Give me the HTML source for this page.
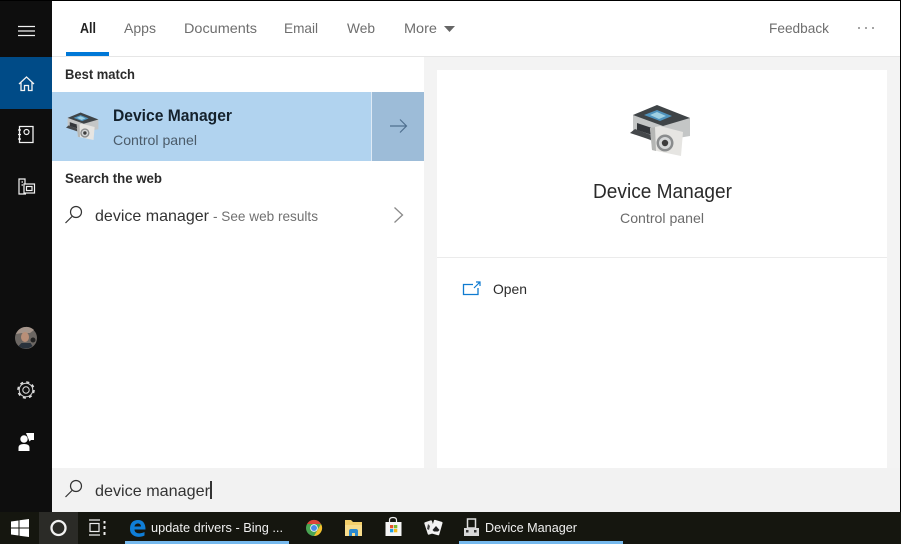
<!DOCTYPE html>
<html><head><meta charset="utf-8"><style>
html,body{margin:0;padding:0;width:901px;height:544px;overflow:hidden;background:#fff}
svg{display:block}
text{font-family:"Liberation Sans",sans-serif}
</style></head><body>
<svg width="901" height="544" viewBox="0 0 901 544" xmlns="http://www.w3.org/2000/svg">
<defs>
<g id="dm">
<polygon points="3,9 3,26 24,36 60,30 60,12 27,0" fill="#c4c6c6"/>
<polygon points="3,9 27,-1 60,12 33,20" fill="#3f4447"/>
<polygon points="14,9 27,4 42,10 30,15" fill="#4f93bd"/>
<polygon points="20,9 27,6 36,10 29,13" fill="#9fd0e2"/>
<polygon points="7,17 22,22 22,29 7,24" fill="#33363a"/>
<polygon points="0,27 5,23 21,29 21,34" fill="#45484b"/>
<polygon points="20,22 30,20 53,26 51,50 22,44" fill="#e6e5e2"/>
<polygon points="20,22 25,21 26,45 22,44" fill="#b5b6b4"/>
<circle cx="35" cy="37" r="8.500" fill="#8a8c8d"/>
<circle cx="35" cy="37" r="6" fill="#d5d7d8"/>
<circle cx="35" cy="37" r="3.200" fill="#3c3c3c"/>
</g>
</defs>

<rect width="901" height="544" fill="#f3f3f3"/>
<rect x="0" y="0" width="901" height="1" fill="#000"/>
<rect x="900" y="0" width="1" height="512" fill="#000"/>
<rect x="52" y="1" width="848" height="55" fill="#fff"/>
<rect x="52" y="56" width="848" height="1" fill="#e6e6e6"/>
<rect x="52" y="57" width="372" height="411" fill="#fff"/>
<rect x="437" y="70" width="450" height="398" fill="#fff"/>

<!-- sidebar -->
<rect x="0" y="1" width="52" height="511" fill="#0e0e0e"/>
<rect x="0" y="57" width="52" height="52" fill="#004b87"/>
<g stroke="#f2f2f2" stroke-width="1.200" fill="none">
<path d="M18 26.500h17M18 31h17M18 35.500h17"/>
<path d="M19 84l7.500-7 7.500 7M21 82.500v8h3.500v-5h4v5h3.500v-8" stroke-width="1.300"/>
<path d="M19.500 126.500h13.500v16h-13.500zM18 130h3M18 134.500h3M18 139h3" stroke-width="1.300"/>
<circle cx="26.500" cy="132" r="2.500"/>
<path d="M19 186.500v-7.500h6v5M19 186.500v7.500h7M21.500 182h1.500M21.500 185h1.500"/>
<rect x="24" y="184" width="10.500" height="9"/>
<rect x="26.500" y="186.500" width="5.500" height="4"/>
</g>
<!-- avatar -->
<circle cx="26" cy="338" r="11" fill="#6c6763"/>
<path d="M16 334a11 11 0 0 1 18-4l-4 3h-8z" fill="#a5958b"/>
<ellipse cx="25" cy="337" rx="4" ry="5" fill="#b98f78"/>
<path d="M18.500 346a11 11 0 0 0 14 0l-2-3h-9z" fill="#29323c"/>
<circle cx="33" cy="340" r="2.500" fill="#222"/>
<!-- gear -->
<circle cx="26" cy="390" r="3.200" fill="none" stroke="#ddd" stroke-width="1"/>
<circle cx="26" cy="390" r="6.800" fill="none" stroke="#ddd" stroke-width="1"/>
<circle cx="26" cy="390" r="8" fill="none" stroke="#ddd" stroke-width="1.600" stroke-dasharray="3.100 3.180"/>
<!-- feedback -->
<circle cx="24" cy="439" r="3.700" fill="#fff"/>
<path d="M18.500 451v-3.500q0-3.500 5.500-3.500t5.500 3.500v3.500z" fill="#fff"/>
<path d="M26 433h8v7h-3l-1.500 1.500-1-2.500z" fill="#fff"/>

<!-- tabs -->
<rect x="66" y="52" width="43" height="4" fill="#0078d7"/>
<g font-size="14" fill="#6e6e6e">
<text x="80" y="33" font-size="14.500" font-weight="bold" fill="#222" textLength="16" lengthAdjust="spacingAndGlyphs">All</text>
<text x="124" y="33" textLength="32" lengthAdjust="spacingAndGlyphs">Apps</text>
<text x="184" y="33" textLength="73" lengthAdjust="spacingAndGlyphs">Documents</text>
<text x="284" y="33" textLength="34" lengthAdjust="spacingAndGlyphs">Email</text>
<text x="347" y="33" textLength="28" lengthAdjust="spacingAndGlyphs">Web</text>
<text x="404" y="33" textLength="33" lengthAdjust="spacingAndGlyphs">More</text>
<text x="769" y="33" textLength="60" lengthAdjust="spacingAndGlyphs">Feedback</text>
</g>
<polygon points="444,26 455,26 449.500,32" fill="#666"/>
<g fill="#888"><circle cx="859" cy="28" r="1"/><circle cx="866" cy="28" r="1"/><circle cx="873" cy="28" r="1"/></g>

<!-- left results -->
<text x="65" y="79" font-size="13.500" font-weight="bold" fill="#2b2b2b" textLength="70" lengthAdjust="spacingAndGlyphs">Best match</text>
<rect x="52" y="92" width="320" height="69" fill="#b1d3ef"/>
<rect x="371" y="92" width="1" height="69" fill="#dfeaf5"/>
<rect x="372" y="92" width="52" height="69" fill="#9dbcd8"/>
<path d="M390 126h16M400 119.500l6.500 6.500-6.500 6.500" fill="none" stroke="#4f6f8f" stroke-width="1.200"/>
<use href="#dm" transform="translate(66,113) scale(0.54)"/>
<text x="113" y="121" font-size="16.500" font-weight="bold" fill="#14212c" textLength="119" lengthAdjust="spacingAndGlyphs">Device Manager</text>
<text x="113" y="145" font-size="14" fill="#4b5b69" textLength="84" lengthAdjust="spacingAndGlyphs">Control panel</text>
<text x="65" y="183" font-size="13.500" font-weight="bold" fill="#2b2b2b" textLength="97" lengthAdjust="spacingAndGlyphs">Search the web</text>
<g fill="none" stroke="#333" stroke-width="1.200">
<circle cx="76" cy="212" r="5.500"/><path d="M72 216.500l-6.500 6.500"/>
</g>
<text x="95" y="221" font-size="16" fill="#333" textLength="114" lengthAdjust="spacingAndGlyphs">device manager</text>
<text x="213" y="221" font-size="14" fill="#707070" textLength="105" lengthAdjust="spacingAndGlyphs">- See web results</text>
<path d="M394.500 207.500l8 7.500-8 7.500" fill="none" stroke="#8a8a8a" stroke-width="1.300"/>

<!-- right panel -->
<use href="#dm" transform="translate(630,106)"/>
<text x="593" y="198" font-size="20" fill="#2a2a2a" textLength="139" lengthAdjust="spacingAndGlyphs">Device Manager</text>
<text x="620" y="223" font-size="14" fill="#6b6b6b" textLength="84" lengthAdjust="spacingAndGlyphs">Control panel</text>
<rect x="437" y="257" width="450" height="1" fill="#ebebeb"/>
<path d="M473 284.500h-9.500v10h14.500v-6.500" fill="none" stroke="#0f7bd0" stroke-width="1.300"/>
<path d="M474 288l5.500-5.500M476 282h4v4" fill="none" stroke="#0f7bd0" stroke-width="1.200"/>
<text x="493" y="294" font-size="14" fill="#2b2b2b" textLength="34" lengthAdjust="spacingAndGlyphs">Open</text>

<!-- search box -->
<rect x="52" y="468" width="848" height="44" fill="#f2f2f2"/>
<g fill="none" stroke="#333" stroke-width="1.200">
<circle cx="76" cy="486" r="5.500"/><path d="M72 490.500l-6.500 6.500"/>
</g>
<text x="95" y="496" font-size="16" fill="#333" textLength="115" lengthAdjust="spacingAndGlyphs">device manager</text>
<rect x="210" y="481" width="2" height="18" fill="#333"/>

<!-- taskbar -->
<rect x="0" y="512" width="901" height="32" fill="#15160f"/>
<rect x="39" y="512" width="39" height="32" fill="#2b2b27"/>
<g fill="#fff">
<polygon points="11,521.500 18.500,520.500 18.500,527.500 11,527.500"/>
<polygon points="19.500,520.300 29,519 29,527.500 19.500,527.500"/>
<polygon points="11,528.500 18.500,528.500 18.500,535.500 11,534.500"/>
<polygon points="19.500,528.500 29,528.500 29,537 19.500,535.700"/>
</g>
<circle cx="58.500" cy="528" r="7" fill="none" stroke="#f2f2f2" stroke-width="2.300"/>
<g fill="none" stroke="#eee" stroke-width="1.200">
<path d="M89 520h11M89 535h11"/>
<rect x="90" y="523.500" width="9" height="8"/>
<path d="M104.500 521v2.500M104.500 526v3M104.500 532v3" stroke-width="2"/>
</g>
<!-- edge -->
<path d="M130 529c0-6 3-9 8-9s7.500 3.500 7.500 9.500h-11c0 4 5 5 10 2.500v3.500c-6 3-14.500 1-14.500-6.500zM134.500 526.500h6.500c0-4-6-4-6.500 0z" fill="#0f7ed8" fill-rule="evenodd"/>
<text x="151" y="532" font-size="13" fill="#f0f0f0" textLength="132" lengthAdjust="spacingAndGlyphs">update drivers - Bing ...</text>
<rect x="125" y="541" width="164" height="3" fill="#76b9ed"/>
<!-- chrome -->
<circle cx="314" cy="528" r="8" fill="#4aa553"/>
<path d="M307 524a8 8 0 0 1 14 0h-7z" fill="#dd4437"/>
<path d="M321 524a8 8 0 0 1-7 12l3.500-6z" fill="#f5c12e"/>
<circle cx="314" cy="528" r="3.800" fill="#fff"/><circle cx="314" cy="528" r="3" fill="#4a89e8"/>
<!-- folder -->
<path d="M345 520h6l2 2h9v14h-17z" fill="#f3cf6b"/>
<rect x="345" y="525" width="17" height="11" fill="#f8dd8c"/>
<path d="M349 536v-5q0-2 2-2h5q2 0 2 2v5h-3v-3h-3v3z" fill="#2c8ad0"/>
<!-- store -->
<path d="M389.500 522v-2q0-2.500 3.500-2.500t3.500 2.500v2" fill="none" stroke="#eee" stroke-width="1.200"/>
<rect x="385.500" y="522" width="16" height="14" fill="#f5f5f5"/>
<rect x="390" y="525" width="3.300" height="3.300" fill="#e4512b"/>
<rect x="394" y="525" width="3.300" height="3.300" fill="#7cb92f"/>
<rect x="390" y="529" width="3.300" height="3.300" fill="#1c9fe3"/>
<rect x="394" y="529" width="3.300" height="3.300" fill="#f7b917"/>
<!-- solitaire -->
<g transform="rotate(-18 430 528)"><rect x="426" y="521" width="8" height="13" rx="1" fill="#eee"/></g>
<g transform="rotate(16 438 528)"><rect x="432" y="521" width="9" height="14" rx="1" fill="#f4f4f4"/></g>
<path d="M436 526l3.500 4-1.500 1.500h-4l-1.500-1.500z" fill="#222"/>
<path d="M428 524l2 2-1 4-2-1z" fill="#444"/>
<!-- device manager taskbar -->
<rect x="467.500" y="519" width="8" height="9" fill="none" stroke="#ddd" stroke-width="1.500"/>
<rect x="464" y="528" width="15" height="8" fill="#d8d8d8"/>
<rect x="466" y="530" width="2.500" height="2.500" fill="#333"/>
<rect x="474" y="530" width="2.500" height="2.500" fill="#333"/>
<text x="485" y="532" font-size="13" fill="#f0f0f0" textLength="92" lengthAdjust="spacingAndGlyphs">Device Manager</text>
<rect x="459" y="541" width="164" height="3" fill="#76b9ed"/>
</svg>
</body></html>
